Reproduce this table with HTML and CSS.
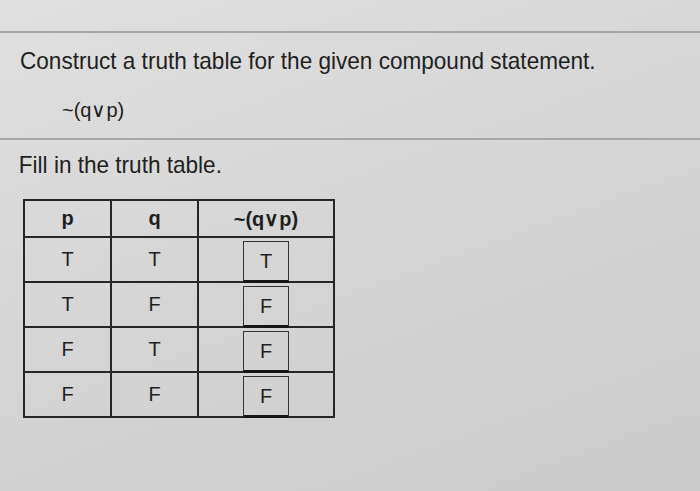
FILE: index.html
```html
<!DOCTYPE html>
<html>
<head>
<meta charset="utf-8">
<link rel="stylesheet" href="styles.css">
</head>
<body>
<div class="page">
  <div class="rule rule-top"></div>
  <div class="question">
    <p class="prompt">Construct a truth table for the given compound statement.</p>
    <p class="formula">~(q∨p)</p>
  </div>
  <div class="rule rule-mid"></div>
  <p class="prompt fill">Fill in the truth table.</p>
  <table class="truth">
    <tr class="head"><th>p</th><th>q</th><th>~(q∨p)</th></tr>
    <tr><td>T</td><td>T</td><td class="ans"><span class="box">T</span></td></tr>
    <tr><td>T</td><td>F</td><td class="ans"><span class="box">F</span></td></tr>
    <tr><td>F</td><td>T</td><td class="ans"><span class="box">F</span></td></tr>
    <tr><td>F</td><td>F</td><td class="ans"><span class="box">F</span></td></tr>
  </table>
</div>
</body>
</html>
```
FILE: styles.css
```css
html, body {
  margin: 0;
  padding: 0;
  width: 700px;
  height: 491px;
  overflow: hidden;
}
body {
  background: linear-gradient(160deg, #e0e0e0 0%, #d6d6d6 45%, #cbcbcb 100%);
  font-family: "Liberation Sans", Arial, sans-serif;
  color: #1f1f1f;
}
.page {
  padding-top: 31px;
}
.rule {
  height: 2px;
  background: #a6a6a6;
}
.question {
  padding: 13px 0 16px 20px;
}
.prompt {
  margin: 0;
  font-size: 24px;
  line-height: 30px;
  transform: scaleX(0.94);
  transform-origin: left center;
}
.formula {
  margin: 22px 0 0 42px;
  font-size: 20px;
  line-height: 24px;
}
.fill {
  padding: 10px 0 0 20px;
}
.truth {
  margin: 19px 0 0 23px;
  border-collapse: collapse;
  font-size: 20px;
}
.truth th, .truth td {
  border: 2px solid #262626;
  text-align: center;
  padding: 0;
  height: 43px;
}
.truth th {
  height: 35px;
  font-weight: bold;
  font-size: 20px;
}
.truth th:nth-child(1), .truth td:nth-child(1) { width: 85px; }
.truth th:nth-child(2), .truth td:nth-child(2) { width: 85px; }
.truth th:nth-child(3), .truth td:nth-child(3) { width: 134px; }
.ans {
  vertical-align: bottom;
}
.box {
  display: inline-block;
  vertical-align: bottom;
  width: 44px;
  height: 38px;
  line-height: 38px;
  border: 1.5px solid #333;
  border-bottom: 3px solid #151515;
  margin-bottom: -2px;
}
```
